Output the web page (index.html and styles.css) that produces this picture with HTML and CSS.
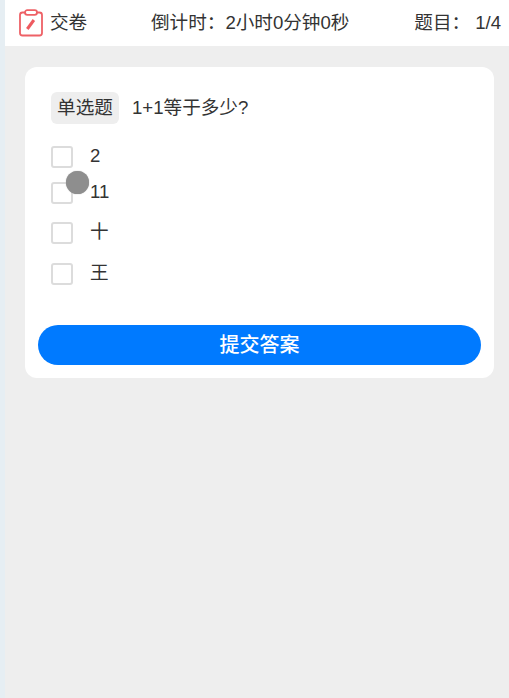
FILE: index.html
```html
<!DOCTYPE html>
<html lang="zh-CN">
<head>
<meta charset="utf-8">
<title>答题</title>
<link rel="stylesheet" href="styles.css">
</head>
<body>
<div class="page">
  <header class="topbar">
    <div class="submit-paper">
      <svg class="clip-icon" width="26" height="28" viewBox="0 0 26 28" fill="none">
        <path d="M7 3.5H4.5A2.5 2.5 0 0 0 2 6v18a2.5 2.5 0 0 0 2.5 2.5h17A2.5 2.5 0 0 0 24 24V6a2.5 2.5 0 0 0-2.5-2.5H19" stroke="#ee6166" stroke-width="1.8"/>
        <rect x="7" y="1.2" width="12" height="4.6" rx="2.3" stroke="#ee6166" stroke-width="1.8"/>
        <path d="M9.3 20l6.6-9" stroke="#ee5a60" stroke-width="3"/>
      </svg>
      <span class="label">交卷</span>
    </div>
    <div class="timer label">倒计时：2小时0分钟0秒</div>
    <div class="progress label"><span>题目：</span><span>1/4</span></div>
  </header>
  <main class="card">
    <div class="question">
      <span class="tag">单选题</span>
      <span class="title label">1+1等于多少?</span>
    </div>
    <ul class="options">
      <li class="option"><span class="box"></span><span class="label">2</span></li>
      <li class="option"><span class="box"></span><span class="label">11</span></li>
      <li class="option cjk"><span class="box"></span><span class="label">十</span></li>
      <li class="option cjk"><span class="box"></span><span class="label">王</span></li>
    </ul>
    <button class="submit" type="button">提交答案</button>
    <span class="touch"></span>
  </main>
</div>
</body>
</html>
```
FILE: styles.css
```css
* { box-sizing: border-box; }
html, body { margin: 0; height: 100%; }
body {
  background: #e6eef3;
  font-family: "Liberation Sans", "Noto Sans CJK SC", sans-serif;
  font-size: 18.6px;
  color: #333;
  padding-left: 5px;
  overflow: hidden;
}
.page { background: #eeeeee; height: 100%; padding-bottom: 1px; }
.topbar {
  height: 46px;
  background: #fff;
  display: flex;
  align-items: center;
  padding: 0 8px 0 13px;
}
.submit-paper { display: flex; align-items: center; gap: 6px; width: 133px; }
.clip-icon { display: block; flex: none; margin-top: -1px; }
.label { line-height: 26px; }
.option .label { padding-bottom: 2px; }
.timer { flex: none; }
.progress { display: flex; align-items: center; gap: 5px; margin-left: auto; }
.card {
  position: relative;
  margin: 21px 15px 0 20px;
  height: 311px;
  background: #fff;
  border-radius: 12px;
  padding: 25px 13px 0;
}
.question { display: flex; align-items: center; gap: 13px; margin-left: 13px; }
.tag {
  width: 68px;
  height: 32px;
  line-height: 32px;
  text-align: center;
  background: #eeeeee;
  border-radius: 6px;
}
.options { list-style: none; margin: 22px 0 0 13px; padding: 0; }
.option { display: flex; align-items: center; gap: 17px; height: 22px; margin-bottom: 14px; }
.option.cjk { margin-top: 18px; margin-bottom: 0; }
.option.cjk:last-child { margin-top: 19px; }
.box {
  width: 22px;
  height: 22px;
  border: 2px solid #dcdcdc;
  border-radius: 3px;
  background: #fff;
  flex: none;
}
.submit {
  display: block;
  width: 100%;
  height: 40px;
  margin-top: 40px;
  border: 0;
  border-radius: 20px;
  background: #007aff;
  color: #fff;
  font: inherit;
  font-size: 20px;
  font-weight: 500;
  line-height: 40px;
  padding: 0;
}
.touch {
  position: absolute;
  left: 41px;
  top: 104px;
  width: 23px;
  height: 23px;
  border-radius: 50%;
  background: #8e8e8e;
  box-shadow: 0 0 1px #8e8e8e;
}
```
